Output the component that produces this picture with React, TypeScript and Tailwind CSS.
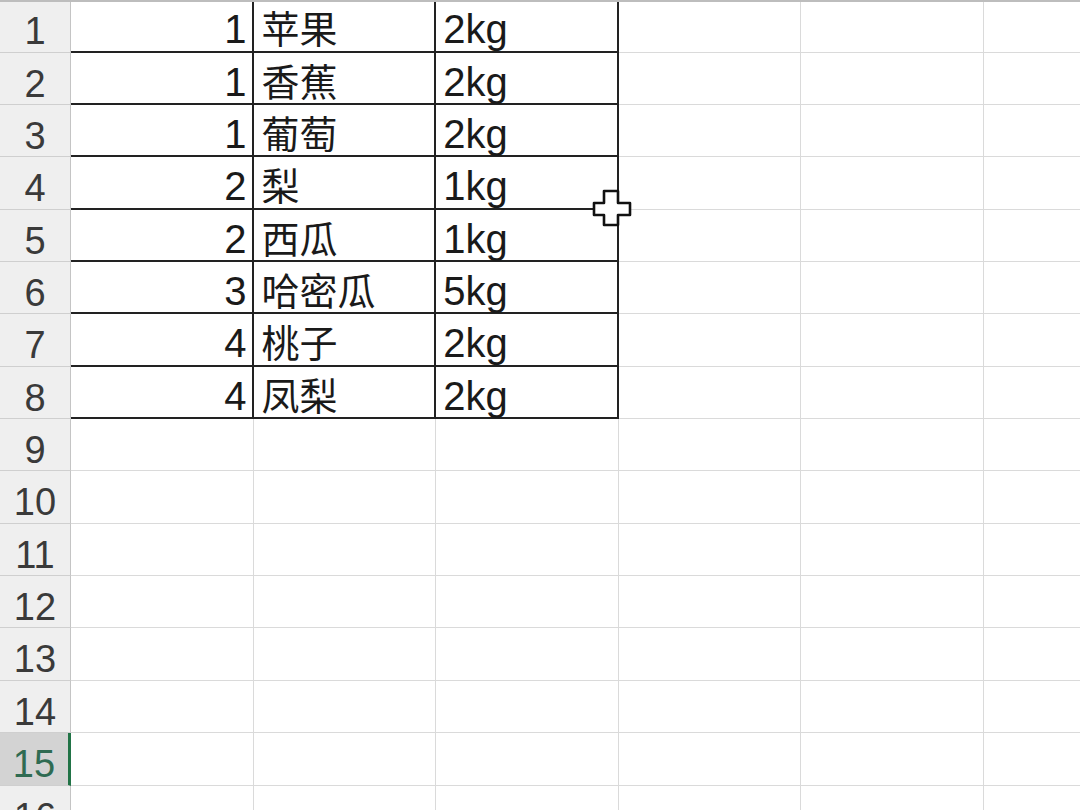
const data: [string, string, string][] = [
  ["1", "苹果", "2kg"],
  ["1", "香蕉", "2kg"],
  ["1", "葡萄", "2kg"],
  ["2", "梨", "1kg"],
  ["2", "西瓜", "1kg"],
  ["3", "哈密瓜", "5kg"],
  ["4", "桃子", "2kg"],
  ["4", "凤梨", "2kg"],
];

const rowNums = Array.from({ length: 16 }, (_, i) => i + 1);
const extraCols = [0, 1, 2];

const font = { fontFamily: '"Liberation Sans", Arial, "Noto Sans CJK SC", sans-serif' };

function Cursor() {
  return (
    <svg
      className="absolute left-[592px] top-[189px]"
      width="40"
      height="38"
      viewBox="0 0 40 38"
    >
      <path
        d="M12 2 H26 V14 H38 V26 H26 V36 H12 V26 H2 V14 H12 Z"
        fill="#ffffff"
        stroke="#111111"
        strokeWidth="2.6"
        strokeLinejoin="round"
      />
    </svg>
  );
}

export default function App() {
  return (
    <div className="relative h-[810px] w-[1080px] overflow-hidden bg-white" style={font}>
      <div className="h-[2px] w-full bg-[#bdbdbd]" />

      {rowNums.map((n) => {
        const row = data[n - 1];
        const first = n === 1;
        const selected = n === 15;
        return (
          <div key={n} className={`flex ${first ? "h-[50.5px]" : "h-[52.36px]"}`}>
            {/* row header */}
            <div
              className={`flex w-[71px] shrink-0 justify-center border-b border-[#cfcfcf] text-[38px] leading-[40px] ${
                first ? "pt-[9px]" : "pt-[11px]"
              } ${
                selected
                  ? "border-r-[3px] border-r-[#217346] bg-[#d3d3d3] text-[#2f6b52]"
                  : "border-r border-r-[#c4c4c4] bg-[#efefef] text-[#3a3a3a]"
              }`}
            >
              {n}
            </div>

            {row ? (
              <>
                <div
                  className={`w-[182.6px] shrink-0 border-r-2 border-b-2 border-[#222222] pr-[5px] text-right text-[40px] leading-[40px] text-[#1a1a1a] ${
                    first ? "pt-[7px]" : "pt-[9px]"
                  }`}
                >
                  {row[0]}
                </div>
                <div
                  className={`w-[182.6px] shrink-0 border-r-2 border-b-2 border-[#222222] pl-[8px] text-[38px] leading-[40px] text-[#1a1a1a] ${
                    first ? "pt-[8px]" : "pt-[10px]"
                  }`}
                >
                  {row[1]}
                </div>
                <div
                  className={`w-[182.6px] shrink-0 border-r-2 border-b-2 border-[#222222] pl-[7px] text-[40px] leading-[40px] text-[#1a1a1a] ${
                    first ? "pt-[7px]" : "pt-[9px]"
                  }`}
                >
                  {row[2]}
                </div>
              </>
            ) : (
              <>
                <div className="w-[182.6px] shrink-0 border-r border-b border-[#dadada]" />
                <div className="w-[182.6px] shrink-0 border-r border-b border-[#dadada]" />
                <div className="w-[182.6px] shrink-0 border-r border-b border-[#dadada]" />
              </>
            )}

            {extraCols.map((c) => (
              <div key={c} className="w-[182.6px] shrink-0 border-r border-b border-[#dadada]" />
            ))}
          </div>
        );
      })}

      <Cursor />
    </div>
  );
}
